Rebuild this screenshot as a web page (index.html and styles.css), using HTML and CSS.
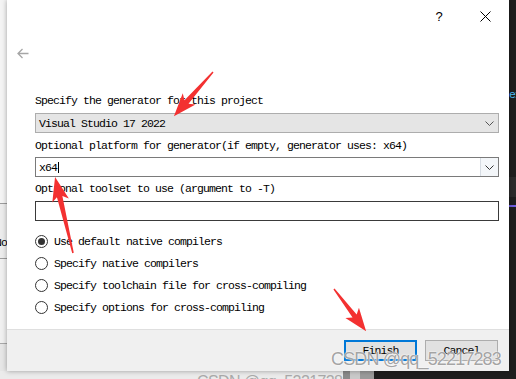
FILE: index.html
```
<!DOCTYPE html>
<html lang="en">
<head>
  <meta charset="UTF-8">
  <title>CMake - Generator</title>
  <link rel="stylesheet" href="styles.css">
</head>
<body>

<div class="screen">

  <div class="behind-left">
    <div class="bl-top"></div>
    <div class="bl-row"><span>No</span></div>
    <div class="bl-mid"></div>
    <div class="bl-low"></div>
  </div>

  <div class="dialog">
    <div class="titlebar">
      <span class="tb-btn help">?</span>
      <span class="tb-btn close">
        <svg width="11" height="11" viewBox="0 0 11 11"><path d="M0.5 0.5 L10.5 10.5 M10.5 0.5 L0.5 10.5" stroke="#000" stroke-width="1" fill="none"/></svg>
      </span>
    </div>

    <div class="nav">
      <svg width="12" height="11" viewBox="0 0 12 11"><path d="M11.5 5.5 H1 M5.5 1 L1 5.5 L5.5 10" stroke="#a6a6a6" stroke-width="1.3" fill="none"/></svg>
    </div>

    <div class="form">
      <div class="label">Specify the generator for this project</div>
      <div class="combo readonly">
        <span class="value">Visual Studio 17 2022</span>
        <svg class="chev" width="9" height="5" viewBox="0 0 9 5"><path d="M0.5 0.5 L4.5 4.5 L8.5 0.5" stroke="#555" stroke-width="1" fill="none"/></svg>
      </div>

      <div class="label">Optional platform for generator(if empty, generator uses: x64)</div>
      <div class="combo editable">
        <span class="value">x64<span class="caret"></span></span>
        <span class="drop">
          <svg width="9" height="5" viewBox="0 0 9 5"><path d="M0.5 0.5 L4.5 4.5 L8.5 0.5" stroke="#333" stroke-width="1" fill="none"/></svg>
        </span>
      </div>

      <div class="label">Optional toolset to use (argument to -T)</div>
      <div class="edit"></div>

      <div class="radios">
        <div class="radio checked"><span class="ring"></span>Use default native compilers</div>
        <div class="radio"><span class="ring"></span>Specify native compilers</div>
        <div class="radio"><span class="ring"></span>Specify toolchain file for cross-compiling</div>
        <div class="radio"><span class="ring"></span>Specify options for cross-compiling</div>
      </div>
    </div>

    <div class="footer">
      <button class="btn default">Finish</button>
      <button class="btn">Cancel</button>
    </div>
  </div>

  <div class="behind-right">
    <span class="code">e1</span>
    <div class="band"></div>
    <div class="accent"></div>
  </div>

  <div class="behind-bottom">
    <div class="bb-light"><span>CSDN @qq_52217283</span></div>
    <div class="bb-block b1"></div>
    <div class="bb-block b2"></div>
    <div class="bb-block b3"></div>
    <div class="bb-dark"></div>
  </div>

  <div class="watermark">CSDN @qq_52217283</div>

  <!-- red annotation arrows drawn over the screenshot -->
  <svg class="annotations" width="516" height="379" viewBox="0 0 516 379">
    <polygon transform="translate(213 72) rotate(131.5)" points="0,-0.7 40,-2.7 36,-8.5 59,0 36,8.5 40,2.7 0,0.7" fill="#f33131"/>
    <polygon transform="translate(73 253) rotate(-103.3)" points="0,-0.8 58,-2.8 54,-8.5 78,0 54,8.5 58,2.8 0,0.8" fill="#f33131"/>
    <polygon transform="translate(334 289) rotate(52.7)" points="0,-0.7 34,-2.6 30,-8.5 53,0 30,8.5 34,2.6 0,0.7" fill="#f33131"/>
  </svg>
</div>

</body>
</html>
```
FILE: styles.css
```
body {
  margin: 0;
  background: #e8e8e8;
}

.screen {
  position: relative;
  width: 516px;
  height: 379px;
  overflow: hidden;
  display: grid;
  grid-template-columns: 7px 502px 7px;
  grid-template-rows: 371px 8px;
  font-family: "Liberation Mono", "Noto Sans CJK SC", monospace;
  font-size: 11.5px;
  letter-spacing: -0.9px;
  color: #000;
}

/* window behind, left side */
.behind-left {
  display: flex;
  flex-direction: column;
  background: #f2f2f2;
}

.bl-top {
  height: 203px;
  background: #f4f4f4;
}

.bl-row {
  height: 56px;
  border-top: 1px solid #9c9c9c;
  border-bottom: 1px solid #9c9c9c;
  background: #ececec;
  overflow: hidden;
  display: flex;
  align-items: center;
  padding-top: 22px;
  box-sizing: border-box;
}

.bl-row span {
  margin-left: -5px;
}

.bl-mid {
  height: 84px;
  border-bottom: 1px solid #a8a8a8;
  background: #f0f0f0;
}

.bl-low {
  flex: 1;
  background: #e6e6e6;
}

/* dialog */
.dialog {
  position: relative;
  z-index: 1;
  display: flex;
  flex-direction: column;
  background: #fff;
  box-shadow: 0 0 5px rgba(0, 0, 0, 0.35);
}

.titlebar {
  height: 32px;
  display: flex;
  justify-content: flex-end;
  align-items: center;
  padding-right: 1px;
}

.tb-btn {
  width: 46px;
  display: flex;
  justify-content: center;
  align-items: center;
}

.help {
  font-family: "Liberation Sans", sans-serif;
  font-size: 13px;
  letter-spacing: 0;
}

.nav {
  height: 62px;
  box-sizing: border-box;
  padding: 16px 0 0 10px;
}

.nav svg {
  display: block;
}

.form {
  display: flex;
  flex-direction: column;
  padding: 0 10px 0 28px;
}

.label {
  line-height: 14px;
  height: 14px;
  white-space: nowrap;
}

.combo {
  height: 20px;
  box-sizing: border-box;
  display: flex;
  align-items: center;
  margin-top: 5px;
  margin-bottom: 6px;
}

.combo .value {
  flex: 1;
  padding-left: 3px;
  display: flex;
  align-items: center;
}

.readonly {
  background: #e5e5e5;
  border: 1px solid #adadad;
  padding-right: 4px;
}

.editable {
  margin-top: 4px;
  margin-bottom: 5px;
  border: 1px solid #7a7a7a;
  background: #fff;
}

.caret {
  display: inline-block;
  width: 1px;
  height: 11px;
  background: #000;
  margin-left: 1px;
}

.drop {
  width: 17px;
  height: 100%;
  display: flex;
  justify-content: center;
  align-items: center;
  background: #f3f6f9;
  border-left: 1px solid #d6dce3;
}

.drop svg, .chev {
  display: block;
}

.edit {
  height: 20px;
  margin-top: 5px;
  border: 1px solid #3a3a3a;
  box-sizing: border-box;
  background: #fff;
}

.radios {
  margin-top: 9px;
  display: flex;
  flex-direction: column;
}

.radio {
  height: 22px;
  display: flex;
  align-items: center;
  white-space: nowrap;
}

.ring {
  width: 13px;
  height: 13px;
  box-sizing: border-box;
  border: 1px solid #333;
  border-radius: 50%;
  margin-right: 6px;
  display: flex;
  justify-content: center;
  align-items: center;
  background: #fff;
}

.radio.checked .ring::after {
  content: "";
  width: 7px;
  height: 7px;
  border-radius: 50%;
  background: #333;
}

.footer {
  margin-top: auto;
  height: 42px;
  box-sizing: border-box;
  border-top: 1px solid #dfdfdf;
  background: #f0f0f0;
  display: flex;
  justify-content: flex-end;
  align-items: flex-start;
  gap: 8px;
  padding: 10px 11px 0 0;
}

.btn {
  width: 73px;
  height: 21px;
  box-sizing: border-box;
  border: 1px solid #adadad;
  background: #e1e1e1;
  font-family: inherit;
  font-size: inherit;
  letter-spacing: inherit;
  color: #000;
  padding: 0;
}

.btn.default {
  border: 2px solid #0078d7;
}

/* editor behind, right side */
.behind-right {
  background: #1e1e1e;
  display: flex;
  flex-direction: column;
  overflow: hidden;
}

.code {
  margin-top: 88px;
  color: #4fc1ff;
  line-height: 14px;
  white-space: nowrap;
}

.band {
  margin-top: 75px;
  height: 20px;
  background: #2b2b2b;
}

.accent {
  margin-top: 8px;
  height: 2px;
  background: #6e5ce0;
}

.behind-bottom {
  grid-column: 1 / -1;
  display: flex;
}

.bb-light {
  width: 343px;
  background: #ebebeb;
  overflow: hidden;
}

.bb-light span {
  display: block;
  margin: 2px 0 0 197px;
  font-family: "Liberation Sans", sans-serif;
  font-size: 16px;
  letter-spacing: -0.6px;
  color: #aaa;
  white-space: nowrap;
}

.bb-block.b1 {
  width: 7px;
  background: #8a8a8a;
}

.bb-block.b2 {
  width: 10px;
  background: #c9c9c9;
}

.bb-block.b3 {
  width: 14px;
  background: #9a9a9a;
}

.bb-dark {
  flex: 1;
  background: #1e1e1e;
}

.watermark {
  position: absolute;
  left: 331px;
  top: 350px;
  z-index: 2;
  font-family: "Liberation Sans", sans-serif;
  font-size: 18px;
  line-height: 18px;
  letter-spacing: -0.85px;
  color: rgba(140, 140, 140, 0.8);
  text-shadow: 0 0 1px #fff, 0 0 2px #fff;
  white-space: nowrap;
}

.annotations {
  position: absolute;
  left: 0;
  top: 0;
  z-index: 3;
  pointer-events: none;
}
```
